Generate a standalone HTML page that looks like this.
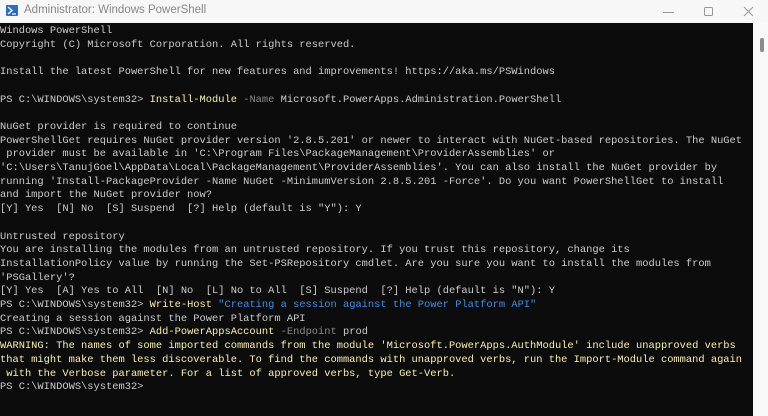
<!DOCTYPE html>
<html><head><style>
html,body{margin:0;padding:0;width:768px;height:416px;overflow:hidden;background:#f9f9f9;}
.tb{position:absolute;left:0;top:0;width:768px;height:23px;background:#f7f7f7;font-family:"Liberation Sans",sans-serif;font-size:11.5px;color:#888;}
.tb .t{position:absolute;left:24px;top:4px;}
.ico{position:absolute;left:6px;top:5px;width:12px;height:11px;background:#2c6cc4;border-radius:1px;}
.term{position:absolute;left:0;top:23px;width:753px;height:393px;background:#0c0c0c;}
pre{margin:0;position:absolute;left:0;top:2px;font-family:"Liberation Mono",monospace;font-size:10.4px;line-height:13.7px;color:#cccccc;}
.y{color:#f9f1a5}.g{color:#8a8a8a}.b{color:#3b8eea}
.sb{position:absolute;left:760px;top:38px;width:4px;height:14px;background:#8a8a8a;border-radius:2px;}
</style></head><body>
<div class="tb"><div class="ico"><svg width="12" height="11"><path d="M2 2 L6 5.5 L2 9" stroke="#fff" stroke-width="1.4" fill="none"/><path d="M6 9 H10" stroke="#fff" stroke-width="1.2"/></svg></div><span class="t">Administrator: Windows PowerShell</span>
<svg style="position:absolute;left:660px;top:4px" width="100" height="16"><path d="M3 8.5H14" stroke="#999" stroke-width="1"/><rect x="44.5" y="3.5" width="8" height="8" rx="1" stroke="#999" fill="none"/><path d="M84 3L93 12M93 3L84 12" stroke="#999" stroke-width="1"/></svg></div>
<div class="term"><pre>Windows PowerShell
Copyright (C) Microsoft Corporation. All rights reserved.

Install the latest PowerShell for new features and improvements! https://aka.ms/PSWindows

PS C:\WINDOWS\system32> <span class="y">Install-Module</span> <span class="g">-Name</span> Microsoft.PowerApps.Administration.PowerShell

NuGet provider is required to continue
PowerShellGet requires NuGet provider version '2.8.5.201' or newer to interact with NuGet-based repositories. The NuGet
 provider must be available in 'C:\Program Files\PackageManagement\ProviderAssemblies' or
'C:\Users\TanujGoel\AppData\Local\PackageManagement\ProviderAssemblies'. You can also install the NuGet provider by
running 'Install-PackageProvider -Name NuGet -MinimumVersion 2.8.5.201 -Force'. Do you want PowerShellGet to install
and import the NuGet provider now?
[Y] Yes  [N] No  [S] Suspend  [?] Help (default is "Y"): Y

Untrusted repository
You are installing the modules from an untrusted repository. If you trust this repository, change its
InstallationPolicy value by running the Set-PSRepository cmdlet. Are you sure you want to install the modules from
'PSGallery'?
[Y] Yes  [A] Yes to All  [N] No  [L] No to All  [S] Suspend  [?] Help (default is "N"): Y
PS C:\WINDOWS\system32> <span class="y">Write-Host</span> <span class="b">"Creating a session against the Power Platform API"</span>
Creating a session against the Power Platform API
PS C:\WINDOWS\system32> <span class="y">Add-PowerAppsAccount</span> <span class="g">-Endpoint</span> prod
<span class="y">WARNING: The names of some imported commands from the module 'Microsoft.PowerApps.AuthModule' include unapproved verbs
that might make them less discoverable. To find the commands with unapproved verbs, run the Import-Module command again
 with the Verbose parameter. For a list of approved verbs, type Get-Verb.</span>
PS C:\WINDOWS\system32></pre></div>
<div class="sb"></div>
</body></html>
